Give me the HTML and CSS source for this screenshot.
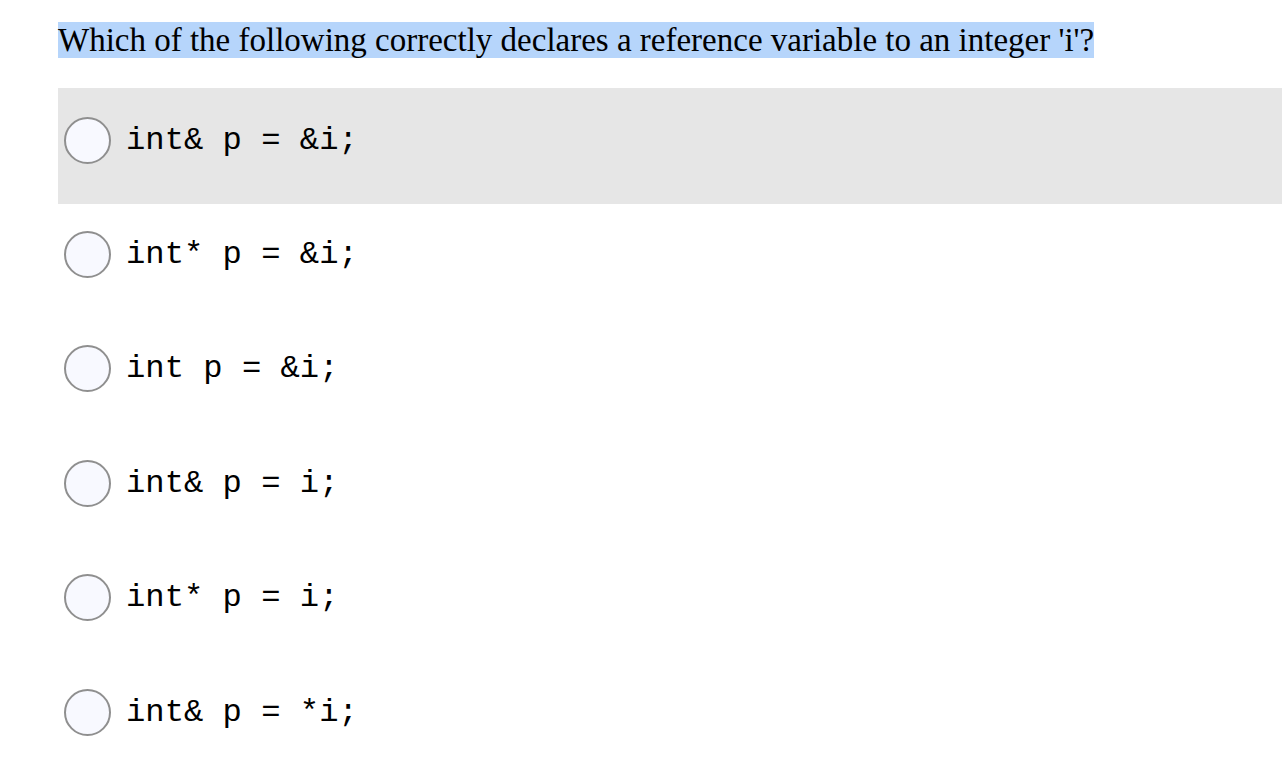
FILE: index.html
```html
<!DOCTYPE html>
<html>
<head>
<meta charset="utf-8">
<link rel="stylesheet" href="styles.css">
</head>
<body>
<div class="page">
  <h1 class="question"><span class="sel">Which of the following correctly declares a reference variable to an integer 'i'?</span></h1>
  <ul class="options">
    <li class="option hover"><span class="radio"></span><code>int&amp; p = &amp;i;</code></li>
    <li class="option"><span class="radio"></span><code>int* p = &amp;i;</code></li>
    <li class="option"><span class="radio"></span><code>int p = &amp;i;</code></li>
    <li class="option"><span class="radio"></span><code>int&amp; p = i;</code></li>
    <li class="option"><span class="radio"></span><code>int* p = i;</code></li>
    <li class="option"><span class="radio"></span><code>int&amp; p = *i;</code></li>
  </ul>
</div>
</body>
</html>
```

FILE: styles.css
```css
html, body {
  margin: 0;
  padding: 0;
  background: #ffffff;
}
.page {
  padding: 22px 0 0 58px;
}
.question {
  margin: 0;
  font-family: "Liberation Serif", "Times New Roman", serif;
  font-weight: normal;
  font-size: 33px;
  line-height: 36px;
  color: #000;
}
.sel {
  background: #b6d5fb;
}
.options {
  list-style: none;
  margin: 30px 0 0 0;
  padding: 0;
}
.option {
  box-sizing: border-box;
  display: flex;
  align-items: center;
  height: 114.4px;
  padding-left: 6px;
  padding-bottom: 10px;
}
.option.hover {
  background: #e6e6e6;
  height: 116px;
  padding-bottom: 12px;
  margin-bottom: -1.6px;
}
.radio {
  box-sizing: border-box;
  width: 47px;
  height: 47px;
  border-radius: 50%;
  border: 2px solid #8f8f8f;
  background: #f8f9ff;
  flex: none;
  margin-right: 15px;
}
code {
  font-family: "Liberation Mono", "Courier New", monospace;
  font-size: 32.2px;
  color: #000;
  white-space: pre;
}
```
